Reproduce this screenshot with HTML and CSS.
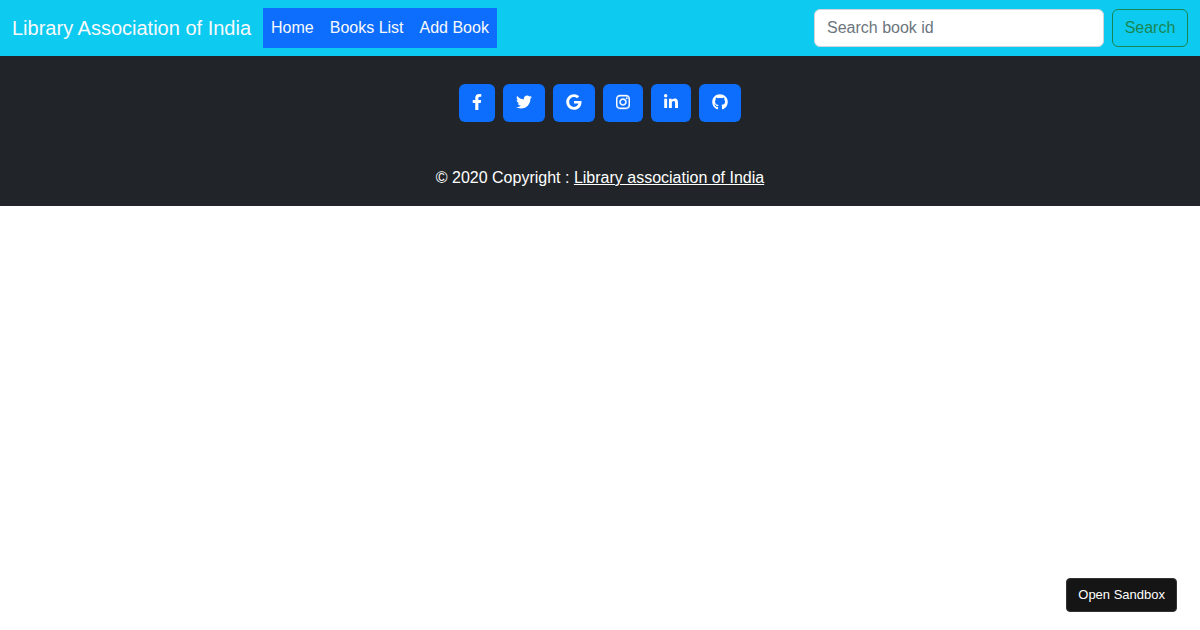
FILE: index.html
```html
<!DOCTYPE html>
<html lang="en">
<head>
<meta charset="utf-8">
<title>Library Association of India</title>
<link rel="stylesheet" href="styles.css">
</head>
<body>
<nav class="navbar">
  <a class="brand" href="#">Library Association of India</a>
  <div class="nav-links">
    <a href="#">Home</a>
    <a href="#">Books List</a>
    <a href="#">Add Book</a>
  </div>
  <form class="search">
    <input class="search-input" type="search" placeholder="Search book id" aria-label="Search book id">
    <button class="search-button" type="submit">Search</button>
  </form>
</nav>
<footer class="footer">
  <section class="social">
    <a class="social-link" href="#" aria-label="Facebook"><svg class="icon icon-facebook" viewBox="0 0 320 512"><path d="M279.14 288l14.22-92.66h-88.91v-60.13c0-25.35 12.42-50.06 52.24-50.06h40.42V6.26S260.43 0 225.36 0c-73.22 0-121.08 44.38-121.08 124.72v70.62H22.89V288h81.39v224h100.17V288z"/></svg></a>
    <a class="social-link" href="#" aria-label="Twitter"><svg class="icon" viewBox="0 0 512 512"><path d="M459.37 151.716c.325 4.548.325 9.097.325 13.645 0 138.72-105.583 298.558-298.558 298.558-59.452 0-114.68-17.219-161.137-47.106 8.447.974 16.568 1.299 25.34 1.299 49.055 0 94.213-16.568 130.274-44.832-46.132-.975-84.792-31.188-98.112-72.772 6.498.974 12.995 1.624 19.818 1.624 9.421 0 18.843-1.3 27.614-3.573-48.081-9.747-84.143-51.98-84.143-102.985v-1.299c13.969 7.797 30.214 12.67 47.431 13.319-28.264-18.843-46.781-51.005-46.781-87.391 0-19.492 5.197-37.36 14.294-52.954 51.655 63.675 129.3 105.258 216.365 109.807-1.624-7.797-2.599-15.918-2.599-24.04 0-57.828 46.782-104.934 104.934-104.934 30.213 0 57.502 12.67 76.67 33.137 23.715-4.548 46.456-13.32 66.599-25.34-7.798 24.366-24.366 44.833-46.132 57.827 21.117-2.273 41.584-8.122 60.426-16.243-14.292 20.791-32.161 39.308-52.628 54.253z"/></svg></a>
    <a class="social-link" href="#" aria-label="Google"><svg class="icon" viewBox="0 0 496 512"><path d="M488 261.8C488 403.3 391.1 504 248 504 110.8 504 0 393.2 0 256S110.8 8 248 8c66.8 0 123 24.5 166.3 64.9l-67.5 64.9C258.5 52.6 94.3 116.6 94.3 256c0 86.5 69.1 156.6 153.7 156.6 98.2 0 135-70.4 140.8-106.900H248v-85.300h236.100c2.300 12.700 3.900 24.900 3.900 41.400z"/></svg></a>
    <a class="social-link" href="#" aria-label="Instagram"><svg class="icon icon-narrow icon-instagram" viewBox="0 0 448 512"><path d="M224.1 141c-63.600 0-114.900 51.300-114.900 114.900s51.300 114.900 114.900 114.900S339 319.500 339 255.900 287.700 141 224.100 141zm0 189.600c-41.100 0-74.700-33.500-74.700-74.700s33.500-74.700 74.700-74.700 74.700 33.500 74.700 74.700-33.600 74.700-74.700 74.700zm146.400-194.300c0 14.900-12 26.800-26.800 26.800-14.900 0-26.800-12-26.800-26.800s12-26.800 26.800-26.800 26.800 12 26.800 26.800zm76.100 27.200c-1.700-35.900-9.900-67.700-36.200-93.900-26.200-26.200-58-34.400-93.900-36.200-37-2.100-147.900-2.100-184.900 0-35.800 1.700-67.600 9.900-93.900 36.100s-34.400 58-36.200 93.900c-2.100 37-2.100 147.900 0 184.900 1.700 35.900 9.900 67.700 36.200 93.900s58 34.400 93.900 36.200c37 2.100 147.900 2.100 184.900 0 35.900-1.700 67.700-9.900 93.900-36.200 26.200-26.200 34.400-58 36.200-93.900 2.100-37 2.100-147.800 0-184.800zM398.800 388c-7.800 19.600-22.900 34.700-42.600 42.600-29.500 11.700-99.500 9-132.100 9s-102.700 2.600-132.100-9c-19.600-7.800-34.700-22.900-42.600-42.600-11.700-29.500-9-99.500-9-132.100s-2.600-102.700 9-132.100c7.800-19.600 22.900-34.700 42.600-42.600 29.500-11.700 99.500-9 132.100-9s102.700-2.600 132.100 9c19.600 7.800 34.700 22.900 42.600 42.600 11.700 29.500 9 99.500 9 132.100s2.700 102.700-9 132.100z"/></svg></a>
    <a class="social-link" href="#" aria-label="LinkedIn"><svg class="icon icon-narrow" viewBox="0 0 448 512"><path d="M100.280 448H7.400V148.900h92.880zM53.790 108.100C24.090 108.100 0 83.500 0 53.800a53.790 53.790 0 0 1 107.580 0c0 29.700-24.100 54.300-53.790 54.300zM447.900 448h-92.680V302.400c0-34.700-.7-79.200-48.290-79.200-48.290 0-55.690 37.700-55.690 76.700V448h-92.780V148.900h89.080v40.800h1.300c12.400-23.500 42.690-48.300 87.880-48.300 94 0 111.280 61.900 111.280 142.300V448z"/></svg></a>
    <a class="social-link" href="#" aria-label="GitHub"><svg class="icon" viewBox="0 0 496 512"><path d="M244.800 8C106.100 8 0 113.300 0 252c0 110.900 69.800 205.800 169.500 239.200 12.800 2.300 17.300-5.600 17.300-12.100 0-6.200-.3-40.400-.3-61.400 0 0-70 15-84.700-29.800 0 0-11.400-29.100-27.800-36.600 0 0-22.900-15.700 1.600-15.400 0 0 24.900 2 38.600 25.800 21.900 38.600 58.600 27.500 72.900 20.900 2.300-16 8.800-27.100 16-33.700-55.900-6.200-112.300-14.300-112.300-110.500 0-27.500 7.600-41.300 23.600-58.900-2.600-6.500-11.100-33.300 2.600-67.900 20.900-6.500 69 27 69 27 20-5.600 41.500-8.500 62.800-8.500s42.800 2.900 62.800 8.500c0 0 48.100-33.600 69-27 13.700 34.700 5.200 61.400 2.600 67.900 16 17.700 25.800 31.500 25.800 58.900 0 96.500-58.900 104.200-114.800 110.500 9.200 7.900 17 22.900 17 46.400 0 33.700-.3 75.400-.3 83.600 0 6.500 4.600 14.400 17.300 12.100C428.200 457.800 496 362.900 496 252 496 113.300 383.500 8 244.800 8z"/></svg></a>
  </section>
  <p class="copyright">© 2020 Copyright : <a href="#">Library association of India</a></p>
</footer>
<button class="sandbox-button" type="button">Open Sandbox</button>
</body>
</html>
```
FILE: styles.css
```css
* {
  box-sizing: border-box;
}

body {
  margin: 0;
  background: #fff;
  color: #212529;
  font: 16px/24px "Helvetica Neue", Helvetica, "Liberation Sans", Arial, sans-serif;
}

a {
  color: inherit;
}

.navbar {
  display: flex;
  align-items: center;
  gap: 12px;
  padding: 8px 12px;
  background: #0dcaf0;
}

.brand {
  color: #f8f9fa;
  font-size: 20px;
  line-height: 30px;
  text-decoration: none;
  white-space: nowrap;
}

.nav-links {
  display: flex;
  background: #0d6efd;
  color: #f8f9fa;
}

.nav-links a {
  padding: 8px;
  text-decoration: none;
  white-space: nowrap;
}

.search {
  display: flex;
  gap: 8px;
  margin-left: auto;
}

.search-input,
.search-button {
  height: 38px;
  padding: 6px 12px;
  border: 1px solid #ced4da;
  border-radius: 6px;
  font: inherit;
}

.search-input {
  width: 290px;
  background: #fff;
  color: #212529;
  appearance: none;
}

.search-input::placeholder {
  color: #6c757d;
  opacity: 1;
}

.search-button {
  width: 76px;
  padding: 6px 0;
  border-color: #198754;
  background: transparent;
  color: #198754;
}

.footer {
  background: #212529;
  color: #fff;
  text-align: center;
}

.social {
  display: flex;
  justify-content: center;
  gap: 8px;
  padding: 28px 24px;
}

.social-link {
  height: 38px;
  padding: 10px 13px;
  border-radius: 6px;
  background: #0d6efd;
}

.icon {
  display: block;
  width: 16px;
  height: 16px;
  fill: #fff;
}

.icon-facebook {
  width: 10px;
}

.icon-narrow {
  width: 14px;
}

.icon-instagram {
  stroke: #fff;
  stroke-width: 12;
}

.copyright {
  margin: 0;
  padding: 16px;
}

.sandbox-button {
  position: fixed;
  right: 23px;
  bottom: 18px;
  height: 34px;
  padding: 0 11px;
  border: 1px solid #343434;
  border-radius: 4px;
  background: #151515;
  color: #fff;
  font: 13px/16px "Liberation Sans", Arial, sans-serif;
}
```
